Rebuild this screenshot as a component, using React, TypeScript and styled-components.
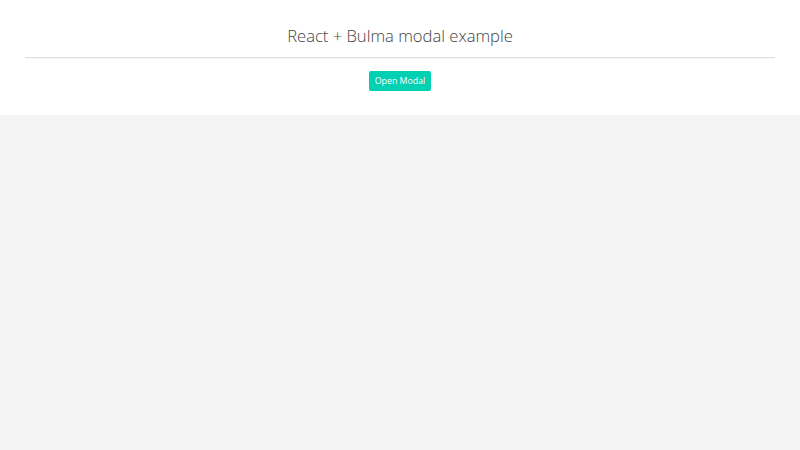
import React from "react";
import styled, { createGlobalStyle } from "styled-components";

const Global = createGlobalStyle`
  html, body { margin: 0; padding: 0; background: #f4f4f4; }
  body { font-family: "Open Sans", "Noto Sans", sans-serif; }
`;

const Section = styled.section`
  background: #fff;
  padding: 24px 25px 0;
  height: 115px;
  box-sizing: border-box;
  display: flex;
  flex-direction: column;
  align-items: center;
`;

const Title = styled.h1`
  margin: 0;
  font-size: 16.6px;
  font-weight: 300;
  color: #444;
  line-height: 24px;
  text-align: center;
`;

const Rule = styled.hr`
  flex-shrink: 0;
  align-self: stretch;
  border: none;
  height: 1px;
  background: #dcdcdc;
  box-shadow: 0 1px 1px rgba(0, 0, 0, 0.03);
  margin: 9px 0 13px;
`;

const Button = styled.button`
  flex-shrink: 0;
  background: #00d1b2;
  color: #fff;
  border: none;
  border-radius: 2px;
  height: 20px;
  padding: 0 6px;
  font-family: "Open Sans", "Noto Sans", sans-serif;
  font-size: 8.8px;
  line-height: 20px;
  cursor: pointer;
`;

export default function App() {
  return (
    <>
      <Global />
      <Section>
        <Title>React + Bulma modal example</Title>
        <Rule />
        <Button>Open Modal</Button>
      </Section>
    </>
  );
}
